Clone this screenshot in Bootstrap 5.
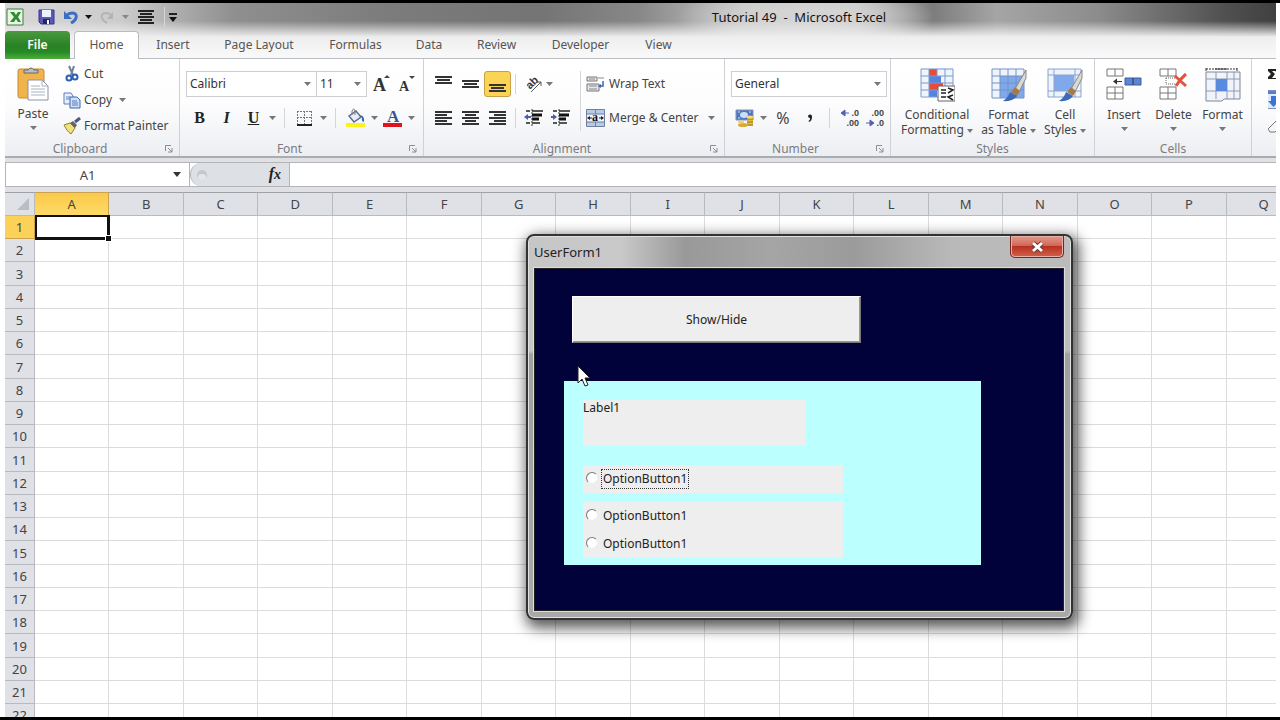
<!DOCTYPE html>
<html lang="en">
<head>
<meta charset="utf-8">
<meta name="viewport" content="width=device-width, initial-scale=1">
<title>Tutorial 49 - Microsoft Excel</title>
<link href="https://cdn.jsdelivr.net/npm/bootstrap@5.3.0/dist/css/bootstrap.min.css" rel="stylesheet">
<style>
:root{--ink:#444;--line:#c3c5c9;--caret:url("data:image/svg+xml,%3Csvg xmlns='http://www.w3.org/2000/svg' width='7' height='4'%3E%3Cpath d='M0 0h7L3.5 4z' fill='%23777'/%3E%3C/svg%3E")}
body{font-family:"Noto Sans","Open Sans",sans-serif;font-size:12px;line-height:16px;color:var(--ink);background:#fff}
.app{height:100vh;border-top:3px solid #000;border-bottom:3px solid #000;padding:0 4px 0 5px}
button{background:none;border:0;padding:0;color:inherit}
svg{display:block;flex:none}
.titlebar{height:56px;background:
 linear-gradient(180deg,transparent 18px,#eeeeef 34px,#fafafa 56px),
 radial-gradient(ellipse 130px 30px at 63% 14px,#d4d4d4 30%,transparent),
 linear-gradient(90deg,#d6d6d6 0,#ccc 9%,#8f8f8f 18%,#7c7c7c 30%,#747474 42%,#888 50%,#c4c4c4 58%,#c5c5c5 67%,#7c7c7c 73%,#a5a5a5 78%,#8c8c8c 86%,#505050 96%,#404040)}
.qat{height:28px}
.qat .tool{height:20px}
.caption{color:#151515;font-size:13px;left:0;right:0;top:6px;padding-left:317px}
.ribbon-tabs{height:28px;border-bottom:1px solid #b9bcc0}
.ribbon-tabs .nav-link{color:#555;padding:0;height:28px;line-height:28px;text-align:center}
.ribbon-tabs .file-tab{width:65px;background:linear-gradient(#4b9a3f,#2b8226 50%,#258a22 75%,#50ad3f);color:#fff;font-weight:600;border-radius:4px 4px 0 0}
.ribbon-tabs .active-tab{width:65px;background:#fff;border:1px solid #b9bcc0;border-bottom:0;border-radius:4px 4px 0 0;margin:0 5px 0 4px;height:28px;line-height:26px}
.ribbon{height:99px;background:linear-gradient(#fff,#fdfdfe 45%,#eceef2);border-bottom:2px solid #a9acb1}
.group{border-right:1px solid #cfd1d6;flex:none}
.g-clip{width:175px}.g-font{width:244px}.g-align{width:301px}.g-num{width:166px}.g-style{width:204px}.g-cells{width:157px}
.group-body{height:80px;padding:12px 0 0 6px}
.group-body.d-flex.bigs{padding-top:9px}
.group-name{height:17px;line-height:19px;color:#7a7c80;text-align:center;position:relative}
.launcher{position:absolute;right:6px;top:6px}
.tool-row{height:26px;align-items:center;display:flex}
.tool-row+.tool-row{margin-top:8px}
.tool{width:27px;height:26px;display:flex;align-items:center;justify-content:center;flex:none}
.drop{width:10px;height:26px;display:flex;align-items:center;justify-content:center;flex:none}
.sep{width:14px;height:20px;flex:none;background:linear-gradient(#d4d6da,#d4d6da) center/1px 100% no-repeat}
.tall{height:60px}
.pressed{background:#fbd455;border:1px solid #c9a04a;border-radius:3px}
.combo{appearance:none;height:26px;border:1px solid #ccced2;background:#fff var(--caret) right 5px center no-repeat;padding:0 16px 0 3px;color:#333;border-radius:0}
.small-tool{height:26px;display:flex;align-items:center;gap:4px;white-space:nowrap}
.stack{padding-top:2px}
.stack .small-tool{gap:3px}
.big{display:flex;flex-direction:column;align-items:center;line-height:15px;flex:none;white-space:nowrap}
.big svg.pic{margin-bottom:5px}
.glyph{font-family:"Liberation Serif",serif;font-weight:700;font-size:16px;color:#222}
.fbar{height:34px;background:#dfe1e5;padding:4px 0 5px}
.name-box{width:185px;border:1px solid #b3b5b9;background:#fff}
.name-box input{width:163px;border:0;text-align:center;color:#444;background:none;outline:0;padding:0;font-size:13px}
.fx-area{width:99px;background:linear-gradient(90deg,#fff 12px,#dde0e5 12px);border-top:1px solid #b3b5b9;border-bottom:1px solid #b3b5b9}
.fx-pill{flex:1;border:1px solid #b3b5b9;border-width:0 0 0 1px;border-radius:12px 0 0 12px;background:#dde0e5;padding:0 8px 0 5px}
.fx-input{border:1px solid #b3b5b9;border-right:0;background:#fff;outline:0;min-width:0}
.sheet{overflow:hidden;min-height:0}
.cells{width:102%;table-layout:fixed;border-collapse:separate;border-spacing:0;background:#fff}
.cells th{font-weight:400;text-align:center;padding:0;background:#dfe1e6;border-right:1px solid #b7babf;border-bottom:1px solid #b7babf;color:#444;font-size:13px;line-height:22px}
.cells thead th{height:24px;line-height:22px;border-top:1px solid #9ea1a6}
.cells th:first-child{width:30px}
.cells td{padding:0;border-right:1px solid #dcdcdc;border-bottom:1px solid #dcdcdc;position:relative}
.cells tbody tr{height:23px}
.cells tbody tr:nth-child(4n+3){height:24px}
.cells .on{background:#fcd157;border-color:#c9a450}
.cells thead .on{background:linear-gradient(#fbc94a,#fedb68)}
.cursor-box{position:absolute;inset:-1px -2px -2px 0;z-index:1;border:2px solid #111;border-width:2px 3px 3px 2px}
.cursor-box::after{content:"";position:absolute;right:-5px;bottom:-5px;width:7px;height:7px;background:#111;border:1px solid #fff}
.dialog-win{position:absolute;left:526px;top:231px;z-index:2;width:547px;border:2px solid #333;border-radius:8px;padding:0 7px 7px 6px;
 background:linear-gradient(180deg,transparent 0,transparent 30%,#a0a0a0 31%,#a9a9a9),linear-gradient(90deg,#c6c6c6 0,#c9c9c9 17%,#999 29%,#a5a5a5 45%,#9b9b9b 60%,#b9b9b9 78%,#bcbcbc);
 box-shadow:inset 0 0 0 1px #e0e0e0,3px 5px 14px 3px rgba(0,0,0,.65)}
.dialog-cap{height:32px;color:#222;font-size:13px}
.close-x{width:54px;height:22px;border:1px solid #6b2a22;border-top:0;border-radius:0 0 5px 5px;background:linear-gradient(#e09a8c,#d2685a 45%,#b93220 50%,#d2604a);box-shadow:inset 0 0 0 1px #e8b0a5;display:flex;align-items:center;justify-content:center}
.canvas{background:#02023a;border:1px solid #222;outline:1px solid #ddd;height:343px;padding:27px 82px 45px 29px;color:#222}
.toggle-btn{width:289px;height:47px;margin-left:8px;background:#eee;border:1px solid;border-color:#fff #777 #777 #fff;box-shadow:inset -1px -1px #999}
.frame-box{background:#bff;margin-top:38px;height:184px;padding:19px 0 0 19px}
.frame-box .lbl{width:223px;height:46px;background:#eee}
.opt{width:260px;height:28px;background:#eee;display:flex;align-items:center;gap:3px;padding-left:3px}
.opt input{appearance:none;width:12px;height:12px;margin:0 0 3px;border-radius:50%;background:#fff;border:1px solid;border-color:#777 #eee #eee #777}
.opt label{padding:0 1px;line-height:18px;border:1px solid transparent}
.opt .focused{border:1px dotted #333}
.pointer{position:absolute;left:49px;top:129px}
</style>
</head>
<body>
<div class="app d-flex flex-column position-relative overflow-hidden">
<header class="titlebar position-relative flex-shrink-0">
 <div class="caption position-absolute text-center">Tutorial 49&nbsp; -&nbsp; Microsoft Excel</div>
 <div class="qat d-flex align-items-center position-relative">
  <svg width="20" height="18" viewBox="0 0 20 18"><path d="M2 1h16v16H2z" fill="#e9f5e4" stroke="#3e7f38"/><path d="M5 4l4 5-4 5h4l2-3 2 3h3l-3-5 3-5h-3l-2 3-2-3z" fill="#2c8a30"/></svg>
  <span class="sep" style="width:9px"></span>
  <button class="tool" aria-label="Save" style="width:24px"><svg width="17" height="16"><path d="M1 1h15v14H3l-2-2z" fill="#5a58b8" stroke="#35358c"/><path d="M4 1h9v7H4z" fill="#eef2ff"/><path d="M5 10h7v5H5z" fill="#222a55"/><path d="M9 11h2v4H9z" fill="#fff"/></svg></button>
  <button class="tool" aria-label="Undo" style="width:25px"><svg width="16" height="16"><path d="M3 7C8 2 15 4 13 9c-1 3-3 4-5 5" fill="none" stroke="#3c6fc4" stroke-width="3"/><path d="M1 2v8h8z" fill="#3c6fc4"/></svg></button>
  <button class="drop" style="width:10px" aria-label="Undo list"><svg width="7" height="4"><path d="M0 0h7L3.500 4z" fill="#111"/></svg></button>
  <button class="tool" aria-label="Redo"><svg width="16" height="16"><path d="M13 7C8 2 1 4 3 9c1 3 3 4 5 5" fill="none" stroke="#b4b4b4" stroke-width="2"/><path d="M14 3v7H8z" fill="#b4b4b4"/></svg></button>
  <button class="drop" aria-label="Redo list"><svg width="7" height="4"><path d="M0 0h7L3.500 4z" fill="#888"/></svg></button>
  <button class="tool" aria-label="Center" style="width:32px"><svg width="18" height="14"><path d="M1 1h16M3 4h12M1 7h16M3 10h12M1 13h16" stroke="#222" stroke-width="2"/></svg></button>
  <span class="sep" style="width:4px"></span>
  <button class="drop" aria-label="Customize" style="width:14px"><svg width="8" height="9"><path d="M0 1h8" stroke="#222" stroke-width="2"/><path d="M0 4h8L4 9z" fill="#111"/></svg></button>
 </div>
 <nav class="ribbon-tabs d-flex position-relative">
  <a href="#" class="nav-link file-tab">File</a>
  <a href="#" class="nav-link active-tab">Home</a>
  <a href="#" class="nav-link" style="width:58px">Insert</a>
  <a href="#" class="nav-link" style="width:114px">Page Layout</a>
  <a href="#" class="nav-link" style="width:79px">Formulas</a>
  <a href="#" class="nav-link" style="width:68px">Data</a>
  <a href="#" class="nav-link" style="width:67px">Review</a>
  <a href="#" class="nav-link" style="width:101px">Developer</a>
  <a href="#" class="nav-link" style="width:55px">View</a>
 </nav>
</header>

<section class="ribbon d-flex flex-shrink-0 overflow-hidden">
 <div class="group g-clip">
  <div class="group-body d-flex pt-0 gap-2">
   <button class="big pt-2 mt-0" style="width:44px"><svg class="pic" width="34" height="34" viewBox="0 0 34 34"><rect x="2" y="2" width="26" height="29" rx="2" fill="#f0b44c" stroke="#c98a2c"/><path d="M8 6V3h4q3-4 6 0h4v3z" fill="#b9bec6" stroke="#666"/><path d="M12 13h14l6 6v14H12z" fill="#fff" stroke="#8a93a5"/><path d="M26 13v6h6M15 19h9M15 22h14M15 25h14M15 28h14" fill="none" stroke="#a9b1c0"/></svg>Paste<svg width="7" height="4" style="margin-top:5px"><path d="M0 0h7L3.500 4z" fill="#777"/></svg></button>
   <div class="stack">
    <button class="small-tool"><svg width="18" height="18"><path d="M6 1l4 9M11 1L8 10" stroke="#6d7f9c" stroke-width="2"/><circle cx="6" cy="13" r="2.500" fill="none" stroke="#2c5fb4" stroke-width="2"/><circle cx="12" cy="12" r="2.500" fill="none" stroke="#2c5fb4" stroke-width="2"/></svg>Cut</button>
    <button class="small-tool"><svg width="18" height="18"><path d="M1 2h7l2 3v8H1z" fill="#e8f0ff" stroke="#5b7fb8"/><path d="M7 6h7l3 3v8H7z" fill="#cfe0fb" stroke="#3c66ad"/><path d="M3 6h4M3 8h4M9 10h5M9 12h6M9 14h6" stroke="#5b7fb8"/></svg>Copy<svg width="7" height="4" class="ms-1"><path d="M0 0h7L3.500 4z" fill="#777"/></svg></button>
    <button class="small-tool"><svg width="18" height="18"><path d="M1 8l6-2 5 5-4 6c-3-2-5-5-7-9z" fill="#efe27a" stroke="#8e8134"/><path d="M7 6l3-2 4 4-2 3z" fill="#666"/><path d="M12 5l5-4" stroke="#4a5a86" stroke-width="3"/></svg>Format Painter</button>
   </div>
  </div>
  <div class="group-name pe-4">Clipboard<svg class="launcher" width="8" height="8"><path d="M.5 6V.5H6M3 3l4 4M7 3v4H3" fill="none" stroke="#8b8d92"/></svg></div>
 </div>

 <div class="group g-font">
  <div class="group-body">
   <div class="tool-row"><select class="combo" aria-label="Font" style="width:131px"><option>Calibri</option></select><select class="combo" aria-label="Font size" style="width:51px;margin-left:-1px"><option>11</option></select>
    <button class="tool" aria-label="Grow font"><svg width="18" height="20"><text x="1" y="17" font-family="Liberation Serif" font-weight="700" font-size="18" fill="#333">A</text><path d="M12 4l3-3 3 3z" fill="#444"/></svg></button>
    <button class="tool" aria-label="Shrink font" style="width:24px"><svg width="18" height="20"><text x="2" y="17" font-family="Liberation Serif" font-weight="700" font-size="14" fill="#333">A</text><path d="M12 2h6l-3 3z" fill="#444"/></svg></button></div>
   <div class="tool-row"><button class="tool glyph">B</button><button class="tool glyph fst-italic">I</button><button class="tool glyph text-decoration-underline">U</button><button class="drop" aria-label="Underline list"><svg width="7" height="4"><path d="M0 0h7L3.500 4z" fill="#777"/></svg></button><span class="sep"></span>
    <button class="tool" aria-label="Borders"><svg width="17" height="17"><path d="M1.500 1v13M8.500 1v13M15.500 1v13M1 1.500h15M1 7.500h15" stroke="#777" stroke-dasharray="2 1"/><path d="M1 15h15" stroke="#222" stroke-width="2"/></svg></button><button class="drop" aria-label="Borders list"><svg width="7" height="4"><path d="M0 0h7L3.500 4z" fill="#777"/></svg></button><span class="sep"></span>
    <button class="tool" aria-label="Fill color"><svg width="19" height="20"><path d="M3 8l7-5 5 6-7 5z" fill="#e8edf6" stroke="#5a6d92" stroke-width="1.500"/><path d="M6 7V3q2-4 3 0v4" fill="none" stroke="#777"/><path d="M14 7q5 1 4 7q-3-1-2-4z" fill="#3c66b4"/><path d="M0 15h19v4H0z" fill="#fff21a"/></svg></button><button class="drop" aria-label="Fill list"><svg width="7" height="4"><path d="M0 0h7L3.500 4z" fill="#777"/></svg></button>
    <button class="tool" aria-label="Font color"><svg width="19" height="20"><text x="4" y="14" font-family="Liberation Serif" font-weight="700" font-size="17" fill="#37548c">A</text><path d="M0 15h19v4H0z" fill="#e0131a"/></svg></button><button class="drop" aria-label="Color list"><svg width="7" height="4"><path d="M0 0h7L3.500 4z" fill="#777"/></svg></button></div>
  </div>
  <div class="group-name pe-4">Font<svg class="launcher" width="8" height="8"><path d="M.5 6V.5H6M3 3l4 4M7 3v4H3" fill="none" stroke="#8b8d92"/></svg></div>
 </div>

 <div class="group g-align">
  <div class="group-body d-flex">
   <div>
    <div class="tool-row"><button class="tool" aria-label="Top align"><svg width="17" height="18"><path d="M0 2h17M2 5h13M0 8h17" stroke="#333" stroke-width="2"/></svg></button><button class="tool" aria-label="Middle align"><svg width="17" height="18"><path d="M0 6h17M2 9h13M0 12h17" stroke="#333" stroke-width="2"/></svg></button><button class="tool pressed" aria-label="Bottom align"><svg width="17" height="18"><path d="M0 10h17M2 13h13M0 16h17" stroke="#333" stroke-width="2"/></svg></button><span class="sep" style="width:9px"></span>
     <button class="tool" aria-label="Orientation"><svg width="20" height="18"><text x="4" y="14" font-family="Liberation Sans" font-weight="700" font-size="11" fill="#333" transform="rotate(-45 6 12)">ab</text><path d="M7 17L17 7M17 11V7h-4" fill="none" stroke="#555"/></svg></button><button class="drop" style="width:4px" aria-label="Orientation list"><svg width="7" height="4"><path d="M0 0h7L3.500 4z" fill="#777"/></svg></button></div>
    <div class="tool-row"><button class="tool" aria-label="Align left"><svg width="17" height="16"><path d="M0 2h17M0 5h12M0 8h17M0 11h12M0 14h17" stroke="#333" stroke-width="2"/></svg></button><button class="tool" aria-label="Align center"><svg width="17" height="16"><path d="M0 2h17M3 5h11M0 8h17M3 11h11M0 14h17" stroke="#333" stroke-width="2"/></svg></button><button class="tool" aria-label="Align right"><svg width="17" height="16"><path d="M0 2h17M5 5h12M0 8h17M5 11h12M0 14h17" stroke="#333" stroke-width="2"/></svg></button><span class="sep" style="width:9px"></span>
     <button class="tool" aria-label="Decrease indent"><svg width="19" height="18"><path d="M2 2h4M8 2h11M2 14h4M8 14h8" stroke="#222" stroke-width="1.500"/><path d="M8 6h10M8 10h7" stroke="#111" stroke-width="3"/><path d="M8 0v18" stroke="#333" stroke-dasharray="2 1"/><path d="M0 8l4-3v6z" fill="#4560a8"/><path d="M3 8h4" stroke="#4560a8" stroke-width="2"/></svg></button><button class="tool" aria-label="Increase indent"><svg width="19" height="18"><path d="M2 2h4M8 2h11M2 14h4M8 14h8" stroke="#222" stroke-width="1.500"/><path d="M8 6h10M8 10h7" stroke="#111" stroke-width="3"/><path d="M8 0v18" stroke="#333" stroke-dasharray="2 1"/><path d="M6 8L2 5v6z" fill="#4560a8"/><path d="M0 8h4" stroke="#4560a8" stroke-width="2"/></svg></button></div>
   </div>
   <span class="sep tall" style="width:12px"></span>
   <div>
    <div class="tool-row"><button class="small-tool"><svg width="19" height="18"><path d="M1 2h10v4H1zM1 9h12v7H1z" fill="#e6e8ec" stroke="#777"/><path d="M12 3h6M3 11h8M3 14h8M3 4h6" stroke="#888"/><path d="M17 6v5h-3" fill="none" stroke="#3c66b4" stroke-width="1.500"/><path d="M12 11l3-2v4z" fill="#3c66b4"/></svg>Wrap Text</button></div>
    <div class="tool-row"><button class="small-tool"><svg width="19" height="18"><path d="M.5 .5h18v17H.5z" fill="#b7cbe9" stroke="#6f7f9c"/><path d="M1 5h17v8H1z" fill="#edf3fd"/><path d="M1 5h17M1 13h17M9.500 1v4M9.500 13v4" stroke="#6f7f9c"/><text x="6" y="12" font-family="Liberation Serif" font-weight="700" font-size="12" fill="#111">a</text><path d="M2 9h4M13 9h4" stroke="#222"/><path d="M1 9l3-2v4zM18 9l-3-2v4z" fill="#222"/></svg>Merge &amp; Center</button><button class="drop ms-2" aria-label="Merge list"><svg width="7" height="4"><path d="M0 0h7L3.500 4z" fill="#777"/></svg></button></div>
   </div>
  </div>
  <div class="group-name pe-4">Alignment<svg class="launcher" width="8" height="8"><path d="M.5 6V.5H6M3 3l4 4M7 3v4H3" fill="none" stroke="#8b8d92"/></svg></div>
 </div>

 <div class="group g-num">
  <div class="group-body">
   <div class="tool-row"><select class="combo" aria-label="Number format" style="width:156px"><option>General</option></select></div>
   <div class="tool-row"><button class="tool" aria-label="Accounting"><svg width="20" height="20"><path d="M1 2h17v10H1z" fill="#4e76bd" stroke="#7f95bb"/><ellipse cx="9" cy="7" rx="4" ry="3" fill="#cfdcf3"/><path d="M3 4h2M14 4h2M3 10h2" stroke="#dbe6fa"/><path d="M12 9h6v9h-6z" fill="#e5b93c"/><path d="M12 11h6M12 14h6M12 17h6" stroke="#9c7a1f"/><ellipse cx="15" cy="9" rx="3" ry="1.500" fill="#f7dc79"/><ellipse cx="8" cy="17" rx="5" ry="2" fill="#d8aa35"/><ellipse cx="6" cy="14" rx="3" ry="1.500" fill="#f3d264"/></svg></button><button class="drop" aria-label="Accounting list"><svg width="7" height="4"><path d="M0 0h7L3.500 4z" fill="#777"/></svg></button><button class="tool fs-6" style="width:30px">%</button><button class="tool" aria-label="Comma style" style="width:24px"><svg width="8" height="12"><path d="M2 4a2 2 0 1 1 4 1q0 4-3 5l-.5-1q2-1 1.500-3-2 0-2-2z" fill="#222"/></svg></button><span class="sep"></span>
    <button class="tool" aria-label="Increase decimal"><svg width="20" height="22"><text x="19" y="9" text-anchor="end" font-family="Liberation Sans" font-weight="700" font-size="9" fill="#444">.0</text><text x="19" y="19" text-anchor="end" font-family="Liberation Sans" font-weight="700" font-size="9" fill="#444">.00</text><path d="M1 6l4-3v6zM4 6h5" fill="#5560b0" stroke="#5560b0"/></svg></button><button class="tool" aria-label="Decrease decimal" style="width:24px"><svg width="20" height="22"><text x="19" y="9" text-anchor="end" font-family="Liberation Sans" font-weight="700" font-size="9" fill="#444">.00</text><text x="19" y="19" text-anchor="end" font-family="Liberation Sans" font-weight="700" font-size="9" fill="#444">.0</text><path d="M9 16l-4-3v6zM1 16h5" fill="#5560b0" stroke="#5560b0"/></svg></button></div>
  </div>
  <div class="group-name pe-4">Number<svg class="launcher" width="8" height="8"><path d="M.5 6V.5H6M3 3l4 4M7 3v4H3" fill="none" stroke="#8b8d92"/></svg></div>
 </div>

 <div class="group g-style">
  <div class="group-body bigs d-flex">
   <button class="big" style="width:80px"><svg class="pic" width="36" height="34" viewBox="0 0 36 34"><path d="M2 0h32v28H2z" fill="#f0f4fb"/><path d="M10 1h8v7h-8zM10 15h14v7H10z" fill="#e84c38"/><path d="M10 8h12v7H10zM10 22h8v7h-8z" fill="#5583dd"/><path d="M2 1h32v28H2zM10 1v28M18 1v7M26 1v28M2 8h32M2 15h32M2 22h32" fill="none" stroke="#7a9ad0"/><path d="M19 18h17v15H19z" fill="#fff" stroke="#666"/><path d="M22 22h5M22 25h5M22 29h5M29 20l5 2-5 3M34 27l-5 2 5 3" fill="none" stroke="#222" stroke-width="1.500"/></svg><span>Conditional</span><span>Formatting <svg class="d-inline" width="6" height="4"><path d="M0 0h6L3 4z" fill="#777"/></svg></span></button>
   <button class="big" style="width:63px"><svg class="pic" width="36" height="34" viewBox="0 0 36 34"><path d="M1 1h32v29H1z" fill="#eff4fc"/><path d="M9 8h24v22H9z" fill="#80a9ec"/><path d="M1 1h32v29H1zM9 1v29M17 1v29M25 1v29M1 8h32M1 15h32M1 22h32" fill="none" stroke="#7392c4"/><path d="M35 2L24 21l4 3 7-14z" fill="#d9d9d6" stroke="#888"/><path d="M20 24l4-5 5 4-3 5z" fill="#a37b4b"/><path d="M12 33q5-3 7-9l7 4q-4 6-14 5z" fill="#3a6ab8"/></svg><span>Format</span><span>as Table <svg class="d-inline" width="6" height="4"><path d="M0 0h6L3 4z" fill="#777"/></svg></span></button>
   <button class="big" style="width:50px"><svg class="pic" width="36" height="34" viewBox="0 0 36 34"><path d="M1 1h33v28H1z" fill="#eff4fc"/><path d="M7 7h20v16H7z" fill="#80a9ec"/><path d="M1 1h33v28H1zM7 1v28M28 1v28M1 7h33M1 23h33" fill="none" stroke="#8ba3cd"/><path d="M35 2L24 21l4 3 7-14z" fill="#d9d9d6" stroke="#888"/><path d="M20 24l4-5 5 4-3 5z" fill="#a37b4b"/><path d="M12 33q5-3 7-9l7 4q-4 6-14 5z" fill="#3a6ab8"/></svg><span>Cell</span><span>Styles <svg class="d-inline" width="6" height="4"><path d="M0 0h6L3 4z" fill="#777"/></svg></span></button>
  </div>
  <div class="group-name">Styles</div>
 </div>

 <div class="group g-cells">
  <div class="group-body bigs d-flex ps-1">
   <button class="big" style="width:50px"><svg class="pic" width="36" height="34" viewBox="0 0 36 34"><path d="M1 1h16v7H1zM9 1v7M1 19h16v12H1zM9 19v12M1 25h16" fill="#fff" stroke="#777"/><path d="M19 10h16v7H19z" fill="#5a86d8" stroke="#3b5f9f"/><path d="M27 10v7M8 13.500h8" stroke="#333"/><path d="M7 13.500l4-3v6z" fill="#333"/></svg>Insert<svg width="7" height="4" style="margin-top:5px"><path d="M0 0h7L3.500 4z" fill="#777"/></svg></button>
   <button class="big" style="width:49px"><svg class="pic" width="36" height="34" viewBox="0 0 36 34"><path d="M4 1h16v7H4zM12 1v7M4 19h16v12H4zM12 19v12M4 25h16" fill="#fff" stroke="#777"/><path d="M10 10h10M10 16h10M10 10v6" stroke="#666" stroke-dasharray="1 1"/><path d="M19 8l11 10M30 6q-6 5-10 12" fill="none" stroke="#e8503f" stroke-width="3"/></svg>Delete<svg width="7" height="4" style="margin-top:5px"><path d="M0 0h7L3.500 4z" fill="#777"/></svg></button>
   <button class="big" style="width:49px"><svg class="pic" width="36" height="34" viewBox="0 0 36 34"><path d="M1 1h31" stroke="#333" stroke-dasharray="2 1"/><path d="M1 0v3M32 0v3M10 1h12" stroke="#333"/><path d="M1 4h34v27H19l-2 2H1z" fill="#f0f3f9" stroke="#7c8798"/><path d="M11 4v27M22 4v27M29 4v27M1 11h34M1 23h34" fill="none" stroke="#8d9bb3"/><path d="M11 11h11v12H11z" fill="#5a8ae0"/></svg>Format<svg width="7" height="4" style="margin-top:5px"><path d="M0 0h7L3.500 4z" fill="#777"/></svg></button>
  </div>
  <div class="group-name">Cells</div>
 </div>

 <div class="stack ps-3 overflow-hidden flex-fill" style="min-width:0">
  <button class="small-tool ps-0" aria-label="AutoSum"><svg width="12" height="18"><path d="M-1 4h10v3L7 6H4l3 3-3 4h4l2-2v3H-1v-1l4-4-4-4z" fill="#222"/></svg></button>
  <button class="small-tool" aria-label="Fill"><svg width="16" height="20"><path d="M-2 .5h15v18H-2z" fill="#dfe9fb" stroke="#7c93c0"/><path d="M-2 1h15v3H-2z" fill="#5b7fc4"/><path d="M3 6h5v5h3l-5.500 6L0 11h3z" fill="#3c74d6"/></svg></button>
  <button class="small-tool" aria-label="Clear"><svg width="18" height="16"><path d="M0 11l8-8 7 1v3l-8 7H2z" fill="#f5f5f7" stroke="#777"/></svg></button>
 </div>
</section>

<section class="fbar d-flex flex-shrink-0">
 <div class="name-box d-flex align-items-center"><input value="A1" aria-label="Name box"><svg width="8" height="5" class="ms-1"><path d="M0 0h8L4 5z" fill="#333"/></svg></div>
 <div class="fx-area d-flex"><div class="fx-pill d-flex align-items-center justify-content-between"><svg width="12" height="12"><circle cx="6" cy="6" r="5" fill="#c5c8cd"/><ellipse cx="6" cy="8" rx="4" ry="3" fill="#e4e6ea"/></svg><button class="glyph fst-italic">f<small>x</small></button></div></div>
 <input class="fx-input flex-fill" aria-label="Formula">
</section>

<main class="sheet flex-fill">
 <table class="cells">
  <thead><tr id="cols"><th aria-label="Select all"><svg class="ms-auto me-1" width="13" height="13"><path d="M12 0v12H0z" fill="#b9bdc4"/></svg></th></tr></thead>
  <tbody id="rows"></tbody>
 </table>
</main>

<section class="dialog-win" role="dialog" aria-label="UserForm1">
 <div class="dialog-cap d-flex justify-content-between"><span class="pt-2">UserForm1</span><button class="close-x" aria-label="Close"><svg width="13" height="12"><path d="M2 2l9 8M11 2l-9 8" stroke="#6a3a36" stroke-width="5"/><path d="M2 2l9 8M11 2l-9 8" stroke="#fff" stroke-width="3"/></svg></button></div>
 <div class="canvas">
  <button class="toggle-btn d-block">Show/Hide</button>
  <div class="frame-box">
   <div class="lbl">Label1</div>
   <div class="opt" style="margin-top:19px"><input type="radio" name="o" id="o1"><label class="focused" for="o1">OptionButton1</label></div>
   <div class="opt" style="margin-top:9px"><input type="radio" name="o" id="o2"><label for="o2">OptionButton1</label></div>
   <div class="opt"><input type="radio" name="o" id="o3"><label for="o3">OptionButton1</label></div>
  </div>
 </div>
 <svg class="pointer" width="14" height="22"><path d="M1 1v17l4-4 3 7 3-1-3-7h5z" fill="#fff" stroke="#222"/></svg>
</section>
</div>
<script src="https://cdn.jsdelivr.net/npm/bootstrap@5.3.0/dist/js/bootstrap.bundle.min.js"></script>
<script>
const letters = [...'ABCDEFGHIJKLMNOPQ'];
document.getElementById('cols').insertAdjacentHTML('beforeend', letters.map((c, i) => `<th scope="col"${i ? '' : ' class="on"'}>${c}</th>`).join(''));
let html = '';
for (let r = 1; r <= 22; r++) {
  html += `<tr><th scope="row"${r > 1 ? '' : ' class="on"'}>${r}</th>` + letters.map((c, i) => r === 1 && i === 0 ? '<td><div class="cursor-box"></div></td>' : '<td></td>').join('') + '</tr>';
}
document.getElementById('rows').innerHTML = html;
</script>
</body>
</html>
